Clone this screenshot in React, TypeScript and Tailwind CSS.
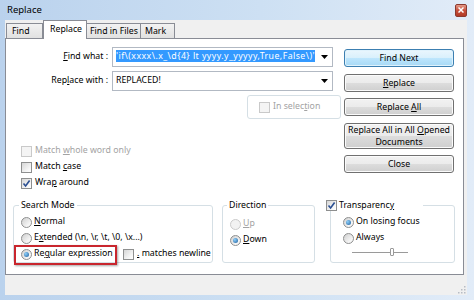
import type { ReactNode } from "react";

function Check({ checked = false, disabled = false }: { checked?: boolean; disabled?: boolean }) {
  return (
    <span
      className={`w-[11px] h-[11px] shrink-0 border flex items-center justify-center ${
        disabled
          ? "border-[#c9c9c9] bg-[#f4f4f4]"
          : "border-[#8e8f8f] bg-[linear-gradient(135deg,#d6d6d6,#f6f6f6_70%,#ffffff)]"
      }`}
    >
      {checked && (
        <svg width="9" height="9" viewBox="0 0 9 9">
          <path d="M1.5 4.5 L3.6 7 L7.6 1.5" fill="none" stroke="#2b4f92" strokeWidth="1.6" />
        </svg>
      )}
    </span>
  );
}

function Radio({ checked = false, disabled = false }: { checked?: boolean; disabled?: boolean }) {
  return (
    <span
      className={`w-[11px] h-[11px] shrink-0 rounded-full border flex items-center justify-center ${
        disabled
          ? "border-[#cbcbcb] bg-[#f2f2f2]"
          : "border-[#8e8f8f] bg-[linear-gradient(135deg,#cfcfcf,#f4f4f4_70%,#ffffff)]"
      }`}
    >
      {checked && (
        <span className="w-[5px] h-[5px] rounded-full bg-[radial-gradient(circle_at_35%_35%,#8fd0fa,#1d5d9c)]" />
      )}
    </span>
  );
}

function Btn({ children, primary = false, tall = false }: { children: ReactNode; primary?: boolean; tall?: boolean }) {
  return (
    <div
      className={`w-[110px] rounded-[3px] border flex items-center justify-center text-center leading-[12px] whitespace-nowrap ${
        tall ? "h-[26px]" : "h-[18px]"
      } ${
        primary
          ? "border-[#3c7fb1] bg-[linear-gradient(#eaf6fd,#d9f0fc_50%,#bee6fd_50%,#a7d9f5)] shadow-[inset_0_0_0_1px_#dff2fc]"
          : "border-[#707070] bg-[linear-gradient(#f2f2f2,#ebebeb_50%,#dddddd_50%,#cfcfcf)] shadow-[inset_0_0_0_1px_#fbfbfb]"
      }`}
    >
      <span>{children}</span>
    </div>
  );
}

function Combo({ children }: { children: ReactNode }) {
  return (
    <div className="ml-[4px] w-[221px] h-[20px] border border-[#b2b9c3] bg-white flex items-center pl-[3px] pr-[3px]">
      <div className="flex-1 overflow-hidden whitespace-nowrap">{children}</div>
      <svg width="7" height="4" viewBox="0 0 7 4" className="ml-[3px] mr-[1px]">
        <path d="M0 0H7L3.5 4Z" fill="#000" />
      </svg>
    </div>
  );
}

export default function App() {
  return (
    <div className="w-[474px] h-[300px] overflow-hidden bg-[linear-gradient(90deg,#bad2ed,#cde0f3_55%,#e2ecf8)] font-['Noto_Sans',sans-serif] text-[8.75px] text-black whitespace-nowrap">
      {/* Title bar */}
      <div className="h-[20px] flex items-center justify-between pl-[7px] pr-[7px]">
        <span className="text-[9.5px] leading-[12px]">Replace</span>
        <div className="w-[12px] h-[13px] rounded-[2px] border border-[#8a3a30] bg-[linear-gradient(#e59a87,#c7503c_50%,#b23a26)] flex items-center justify-center">
          <svg width="6" height="6" viewBox="0 0 6 6">
            <path d="M0.5 0.5L5.5 5.5M5.5 0.5L0.5 5.5" stroke="#fff" strokeWidth="1.5" />
          </svg>
        </div>
      </div>

      {/* Client area */}
      <div className="ml-[5px] w-[462px] h-[275px] bg-[#f0f0f0] flex flex-col">
        {/* Tabs */}
        <div className="h-[18px] flex items-end pl-[1px]">
          <div className="w-[37px] h-[15px] border border-b-0 border-[#898c95] bg-[linear-gradient(#f2f2f2,#e1e1e1)] pl-[5px] leading-[14px]">
            Find
          </div>
          <div className="relative z-10 w-[44px] h-[19px] -mb-[1px] border border-b-0 border-[#898c95] bg-white pl-[6px] leading-[16px]">
            Replace
          </div>
          <div className="w-[54px] h-[15px] border border-l-0 border-b-0 border-[#898c95] bg-[linear-gradient(#f2f2f2,#e1e1e1)] pl-[3px] leading-[14px]">
            Find in Files
          </div>
          <div className="w-[34px] h-[15px] border border-l-0 border-b-0 border-[#898c95] bg-[linear-gradient(#f2f2f2,#e1e1e1)] pl-[4px] leading-[14px]">
            Mark
          </div>
        </div>

        {/* Tab panel */}
        <div className="w-[459px] h-[237px] border border-[#898c95] bg-white pt-[8px]">
          <div className="flex h-[152px]">
            {/* Left column */}
            <div className="w-[338px] shrink-0 flex flex-col">
              <div className="flex items-center h-[20px]">
                <span className="w-[102px] text-right">
                  <u>F</u>ind what :
                </span>
                <Combo>
                  <span className="bg-[#3399ff] text-white tracking-[0.45px]">'if\(xxxx\.x_\d{"{4}"} lt yyyy.y_yyyyy,True,False\)'</span>
                </Combo>
              </div>
              <div className="flex items-center h-[20px] mt-[4px]">
                <span className="w-[102px] text-right">
                  Rep<u>l</u>ace with :
                </span>
                <Combo>
                  <span>REPLACED!</span>
                </Combo>
              </div>
              <div className="ml-[241px] w-[94px] h-[24px] mt-[4px] border border-[#d5dfe5] rounded-[3px] flex items-center pl-[11px] gap-[3px] text-[#a3a3a3]">
                <Check disabled />
                <span>
                  In selec<u>t</u>ion
                </span>
              </div>
              <div className="mt-[24px] pl-[15px] flex flex-col">
                <div className="h-[16px] flex items-center gap-[3px] text-[#a3a3a3]">
                  <Check disabled />
                  <span>
                    Match <u>w</u>hole word only
                  </span>
                </div>
                <div className="h-[16px] flex items-center gap-[3px]">
                  <Check />
                  <span>
                    Match <u>c</u>ase
                  </span>
                </div>
                <div className="h-[16px] flex items-center gap-[3px]">
                  <Check checked />
                  <span>
                    Wra<u>p</u> around
                  </span>
                </div>
              </div>
            </div>

            {/* Button column */}
            <div className="w-[110px] shrink-0 flex flex-col pt-[2px] gap-[6px]">
              <Btn primary>Find Next</Btn>
              <div className="mt-[1px]">
                <Btn>
                  <u>R</u>eplace
                </Btn>
              </div>
              <Btn>
                Replace <u>A</u>ll
              </Btn>
              <div className="mt-[1px]">
                <Btn tall>
                  Replace All in All <u>O</u>pened
                  <br />
                  Documents
                </Btn>
              </div>
              <Btn>Close</Btn>
            </div>
          </div>

          {/* Group boxes */}
          <div className="flex items-start">
            <fieldset className="ml-[7px] w-[200px] h-[64px] shrink-0 border border-[#d5dfe5] rounded-[3px]">
              <legend className="ml-[5px] px-[2px] leading-[12px]">Search Mode</legend>
              <div className="pt-[3px] pl-[7px] flex flex-col">
                <div className="h-[16px] flex items-center gap-[2px]">
                  <Radio />
                  <span>
                    <u>N</u>ormal
                  </span>
                </div>
                <div className="h-[16px] flex items-center gap-[2px]">
                  <Radio />
                  <span>
                    E<u>x</u>tended (\n, \r, \t, \0, \x...)
                  </span>
                </div>
                <div className="relative h-[16px] flex items-center">
                  <div className="absolute left-[-7px] top-[-1px] w-[103px] h-[20px] border-2 border-[#c9262e] shadow-[1px_1px_2px_rgba(0,0,0,0.35)]" />
                  <span className="w-[102px] shrink-0 flex items-center gap-[2px]">
                    <Radio checked />
                    <span>
                      Re<u>g</u>ular expression
                    </span>
                  </span>
                  <span className="shrink-0 flex items-center gap-[3px]">
                    <Check />
                    <span>
                      <u>.</u> matches newline
                    </span>
                  </span>
                </div>
              </div>
            </fieldset>

            <fieldset className="ml-[9px] w-[93px] h-[64px] shrink-0 border border-[#d5dfe5] rounded-[3px]">
              <legend className="ml-[4px] px-[2px] leading-[12px]">Direction</legend>
              <div className="pt-[5px] pl-[7px] flex flex-col">
                <div className="h-[16px] flex items-center gap-[2px] text-[#a3a3a3]">
                  <Radio disabled />
                  <span>
                    <u>U</u>p
                  </span>
                </div>
                <div className="h-[16px] flex items-center gap-[2px]">
                  <Radio checked />
                  <span>
                    <u>D</u>own
                  </span>
                </div>
              </div>
            </fieldset>

            <fieldset className="ml-[15px] w-[125px] h-[64px] shrink-0 border border-[#d5dfe5] rounded-[3px]">
              <legend className="-ml-[5px] w-[97px] leading-[12px] bg-white flex items-center gap-[2px]">
                <Check checked />
                <span>
                  Transparenc<u>y</u>
                </span>
              </legend>
              <div className="pt-[3px] pl-[12px] flex flex-col">
                <div className="h-[16px] flex items-center gap-[2px]">
                  <Radio checked />
                  <span>On losing focus</span>
                </div>
                <div className="h-[16px] flex items-center gap-[2px]">
                  <Radio />
                  <span>Always</span>
                </div>
                <div className="h-[10px] mt-[1px] ml-[9px] w-[56px] flex items-center">
                  <div className="w-[38px] h-[1px] bg-[#9a9a9a]" />
                  <div className="w-[4px] h-[8px] border border-[#9a9a9a] rounded-[1px] bg-white" />
                  <div className="flex-1 h-[1px] bg-[#9a9a9a]" />
                </div>
              </div>
            </fieldset>
          </div>
        </div>

        {/* Bottom strip with size grip */}
        <div className="flex-1 flex items-end justify-end pr-[1px] pb-[1px]">
          <svg width="9" height="9" viewBox="0 0 9 9">
            <g fill="#b7bcc4">
              <rect x="7" y="1" width="1.5" height="1.5" />
              <rect x="4" y="4" width="1.5" height="1.5" />
              <rect x="7" y="4" width="1.5" height="1.5" />
              <rect x="1" y="7" width="1.5" height="1.5" />
              <rect x="4" y="7" width="1.5" height="1.5" />
              <rect x="7" y="7" width="1.5" height="1.5" />
            </g>
          </svg>
        </div>
      </div>
    </div>
  );
}
